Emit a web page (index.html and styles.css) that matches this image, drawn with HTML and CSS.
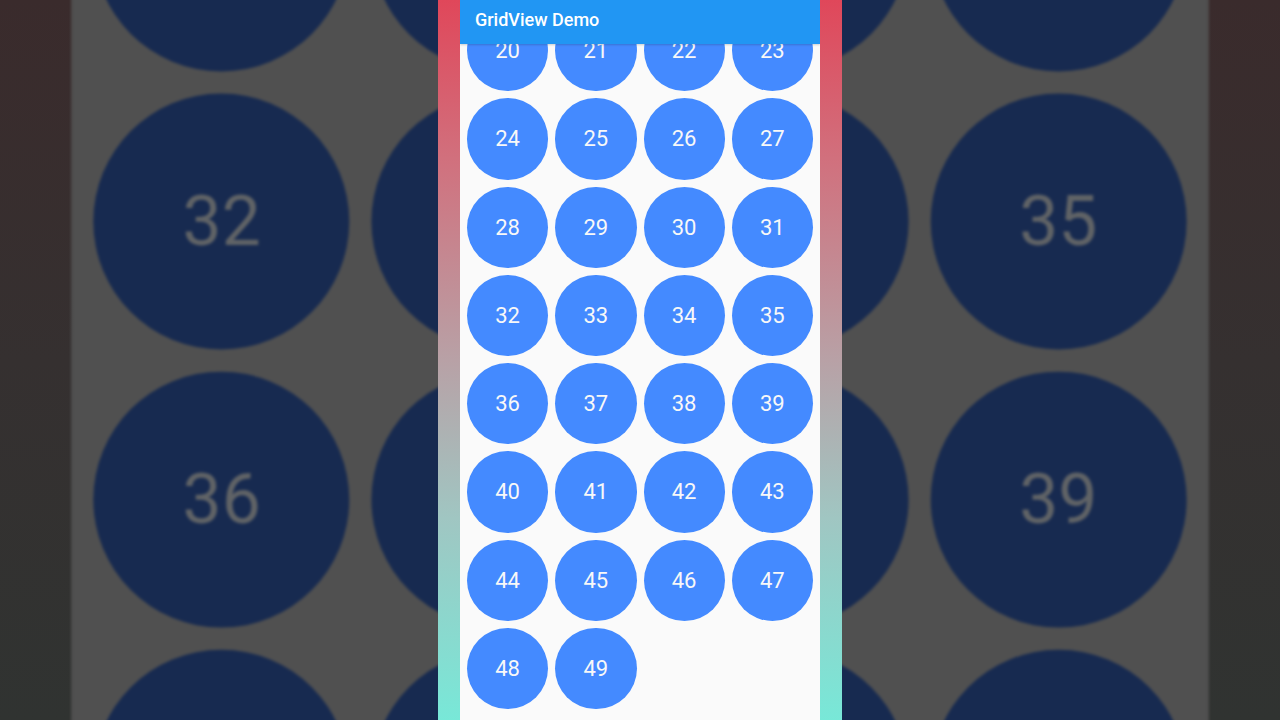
FILE: index.html
```html
<!DOCTYPE html>
<html>
<head>
<meta charset="utf-8">
<link rel="stylesheet" href="styles.css">
</head>
<body>
<div class="backdrop">
  <div class="screen ghost">
    <div class="appbar">GridView Demo</div>
    <div class="content">
      <div class="grid">
        <div class="cell">20</div><div class="cell">21</div><div class="cell">22</div><div class="cell">23</div>
        <div class="cell">24</div><div class="cell">25</div><div class="cell">26</div><div class="cell">27</div>
        <div class="cell">28</div><div class="cell">29</div><div class="cell">30</div><div class="cell">31</div>
        <div class="cell">32</div><div class="cell">33</div><div class="cell">34</div><div class="cell">35</div>
        <div class="cell">36</div><div class="cell">37</div><div class="cell">38</div><div class="cell">39</div>
        <div class="cell">40</div><div class="cell">41</div><div class="cell">42</div><div class="cell">43</div>
        <div class="cell">44</div><div class="cell">45</div><div class="cell">46</div><div class="cell">47</div>
        <div class="cell">48</div><div class="cell">49</div>
      </div>
    </div>
  </div>
</div>
<div class="stage">
  <div class="phone">
    <div class="screen">
      <div class="appbar">GridView Demo</div>
      <div class="content">
        <div class="grid">
          <div class="cell">20</div><div class="cell">21</div><div class="cell">22</div><div class="cell">23</div>
          <div class="cell">24</div><div class="cell">25</div><div class="cell">26</div><div class="cell">27</div>
          <div class="cell">28</div><div class="cell">29</div><div class="cell">30</div><div class="cell">31</div>
          <div class="cell">32</div><div class="cell">33</div><div class="cell">34</div><div class="cell">35</div>
          <div class="cell">36</div><div class="cell">37</div><div class="cell">38</div><div class="cell">39</div>
          <div class="cell">40</div><div class="cell">41</div><div class="cell">42</div><div class="cell">43</div>
          <div class="cell">44</div><div class="cell">45</div><div class="cell">46</div><div class="cell">47</div>
          <div class="cell">48</div><div class="cell">49</div>
        </div>
      </div>
    </div>
  </div>
</div>
</body>
</html>
```
FILE: styles.css
```css
* { box-sizing: border-box; }
html, body {
  margin: 0;
  width: 1280px;
  height: 720px;
  overflow: hidden;
}
body {
  position: relative;
  background: linear-gradient(180deg, #3a2b2c 0%, #353030 50%, #303331 100%);
  font-family: Roboto, "Liberation Sans", sans-serif;
}

.stage {
  position: relative;
  z-index: 1;
  display: flex;
  justify-content: center;
  height: 720px;
}
.phone {
  width: 404px;
  height: 720px;
  padding: 0 22px;
  background: linear-gradient(180deg, #e0475a 0%, #d1707d 22%, #b8a1a6 50%, #a0c6c2 72%, #78e8d8 100%);
}
.screen {
  width: 360px;
  height: 720px;
  background: #fafafa;
  display: flex;
  flex-direction: column;
  overflow: hidden;
}
.appbar {
  position: relative;
  z-index: 2;
  flex: 0 0 44px;
  height: 44px;
  background: #2196f3;
  color: #ffffff;
  font-family: Roboto, "Liberation Sans", sans-serif;
  font-weight: 500;
  font-size: 18px;
  display: flex;
  align-items: center;
  padding: 0 0 5px 15px;
  box-shadow: 0 1px 2px rgba(0, 0, 0, 0.18);
}
.content {
  flex: 1;
  overflow: hidden;
}
.grid {
  display: grid;
  grid-template-columns: repeat(4, 1fr);
  gap: 7px;
  padding: 0 7px;
  margin-top: -34px;
}
.cell {
  aspect-ratio: 1 / 1;
  border-radius: 50%;
  background: #448aff;
  color: #f8f8f8;
  font-family: Roboto, "Liberation Sans", sans-serif;
  font-size: 22px;
  display: flex;
  align-items: center;
  justify-content: center;
}

/* blurred, zoomed copy behind the phone */
.backdrop {
  position: absolute;
  inset: 0;
  overflow: hidden;
  z-index: 0;
}
.screen.ghost {
  position: absolute;
  left: 460px;
  top: 0;
  height: 720px;
  transform: scale(3.16);
  transform-origin: 180px 359px;
  background: #505050;
  filter: blur(0.5px);
}
.ghost .appbar { background: #0a2e4a; box-shadow: none; }
.ghost .cell { background: #172a50; color: #606366; }
```
